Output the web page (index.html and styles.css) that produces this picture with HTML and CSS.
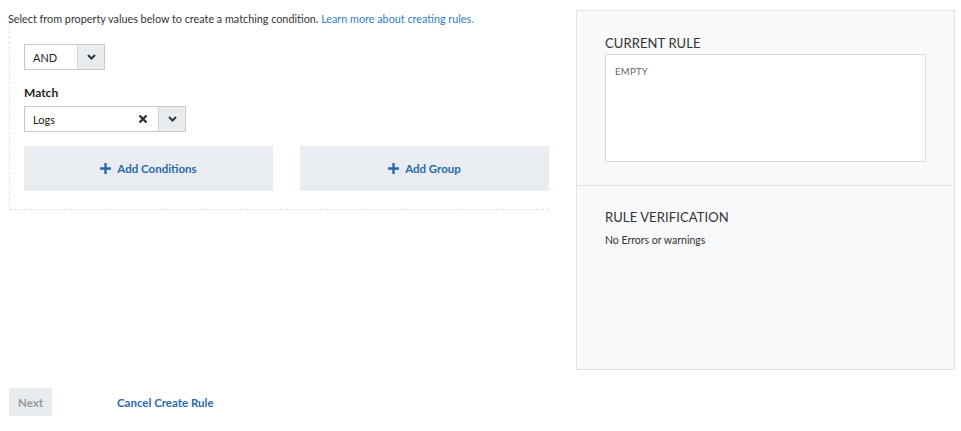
FILE: index.html
```html
<!DOCTYPE html>
<html>
<head>
<meta charset="utf-8">
<link rel="stylesheet" href="styles.css">
</head>
<body>
<div class="page">
  <div class="main">
    <div class="left">
      <p class="intro">Select from property values below to create a matching condition. <a class="link" href="#">Learn more about creating rules.</a></p>
      <div class="builder">
        <div class="select sel-and">
          <span class="val">AND</span>
          <span class="arrow"><svg width="9" height="6" viewBox="0 0 9 6"><path d="M1 1l3.5 3.5L8 1" fill="none" stroke="#333" stroke-width="2"/></svg></span>
        </div>
        <div class="label">Match</div>
        <div class="select sel-match">
          <span class="val">Logs</span>
          <span class="clear"><svg width="10" height="10" viewBox="0 0 10 10"><path d="M1.5 1.5l7 7M8.5 1.5l-7 7" stroke="#333" stroke-width="2.4"/></svg></span>
          <span class="arrow"><svg width="9" height="6" viewBox="0 0 9 6"><path d="M1 1l3.5 3.5L8 1" fill="none" stroke="#333" stroke-width="2"/></svg></span>
        </div>
        <div class="actions">
          <button class="add"><svg width="11" height="11" viewBox="0 0 11 11"><path d="M5.5 0v11M0 5.5h11" stroke="#2a6aa8" stroke-width="2.4"/></svg>Add Conditions</button>
          <button class="add"><svg width="11" height="11" viewBox="0 0 11 11"><path d="M5.5 0v11M0 5.5h11" stroke="#2a6aa8" stroke-width="2.4"/></svg>Add Group</button>
        </div>
      </div>
    </div>
    <div class="panel">
      <div class="section">
        <h3 class="ptitle">CURRENT RULE</h3>
        <div class="rulebox">EMPTY</div>
      </div>
      <div class="section verify">
        <h3 class="ptitle">RULE VERIFICATION</h3>
        <div class="msg">No Errors or warnings</div>
      </div>
    </div>
  </div>
  <div class="footer">
    <button class="next">Next</button>
    <a class="cancel" href="#">Cancel Create Rule</a>
  </div>
</div>
</body>
</html>
```
FILE: styles.css
```css
* { box-sizing: border-box; }
html, body { margin: 0; padding: 0; background: #fff; }
body { font-family: Lato, "Open Sans", sans-serif; color: #333; width: 961px; height: 431px; overflow: hidden; }
.page { padding: 0 6px 0 9px; }
.main { display: flex; align-items: flex-start; }
.left { width: 540px; margin-top: -16px; }
.intro { margin: 0; padding: 28px 0 0 0; font-size: 10.8px; line-height: 14px; margin-left: -1px; color: #333; }
.link { color: #2f7dc7; text-decoration: none; }
.builder { border-left: 1px dashed #e3e3e3; border-bottom: 1px dashed #e3e3e3; padding: 18px 0 18px 14px; margin-top: 0; }
.select { display: flex; height: 26px; border: 1px solid #c9c9c9; background: #fff; align-items: stretch; }
.sel-and { width: 81px; }
.sel-match { width: 162px; }
.val { flex: 1; font-size: 11px; padding-left: 8px; display: flex; align-items: center; color: #222; }
.clear { width: 30px; display: flex; align-items: center; justify-content: center; }
.arrow { width: 27px; background: #e9ecef; border-left: 1px solid #d4d4d4; display: flex; align-items: center; justify-content: center; }
.label { font-size: 12px; font-weight: bold; margin: 15px 0 6px; line-height: 15px; color: #222; }
.actions { display: flex; gap: 27px; margin-top: 14px; }
.add { width: 249px; height: 45px; border: none; background: #e9edf1; color: #2a6aa8; font-family: Lato, sans-serif; font-weight: bold; font-size: 11.5px; display: flex; align-items: center; justify-content: center; gap: 6px; padding: 0; }
.panel { margin-left: 27px; width: 380px; height: 360px; margin-top: 10px; border: 1px solid #e1e3e6; background: #f8f9fa; display: flex; flex-direction: column; }
.section { padding: 24px 28px 23px 28px; border-bottom: 1px solid #e1e3e6; }
.verify { border-bottom: none; flex: 1; padding-top: 23px; }
.ptitle { margin: 0 0 3px; font-size: 13px; font-weight: normal; line-height: 16px; color: #333; letter-spacing: 0.1px; }
.verify .ptitle { margin-bottom: 0; }
.rulebox { height: 108px; background: #fff; border: 1px solid #d8dadd; font-size: 9.5px; color: #666; padding: 11px 9px; letter-spacing: 0.3px; }
.msg { font-size: 10.5px; color: #333; margin-top: 9px; }
.footer { display: flex; align-items: center; margin-top: 18px; }
.next { width: 43px; height: 28px; border: none; background: #e9ecef; color: #999; font-family: Lato, sans-serif; font-weight: bold; font-size: 11.5px; padding: 0; }
.cancel { margin-left: 65px; color: #2a6aa8; font-weight: bold; font-size: 11.5px; text-decoration: none; }
```
